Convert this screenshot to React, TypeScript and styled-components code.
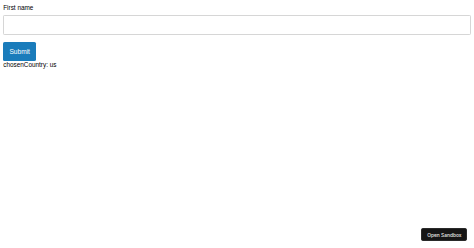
import React from "react";
import styled, { createGlobalStyle } from "styled-components";

const Global = createGlobalStyle`
  html, body { margin: 0; padding: 0; background: #fff; }
  body {
    margin: 3.2px;
    font-family: "Liberation Sans", Arial, sans-serif;
    font-size: 6.4px;
    color: #000;
  }
`;

const Form = styled.form`
  display: flex;
  flex-direction: column;
  align-items: flex-start;
`;

const Label = styled.label`
  display: block;
  line-height: 1.15;
  padding-top: 1px;
  margin-bottom: 3.2px;
`;

const Input = styled.input`
  box-sizing: border-box;
  width: 100%;
  height: 20.4px;
  border: 0.4px solid #d6d6d6;
  border-radius: 1.2px;
  padding: 0 4px;
  font-family: inherit;
  font-size: 6.4px;
  margin: 0 0 6.8px;
  outline: none;
`;

const Button = styled.button`
  box-sizing: border-box;
  height: 19px;
  width: 33px;
  padding: 0;
  border: none;
  border-radius: 1.6px;
  background: #1a7cbb;
  color: #fff;
  font-family: inherit;
  font-size: 6.6px;
  cursor: pointer;
`;

const Output = styled.div`
  line-height: 1.15;
  margin-top: 0.4px;
`;

const SandboxButton = styled.a`
  position: fixed;
  right: 6.6px;
  bottom: 6.8px;
  box-sizing: border-box;
  width: 46px;
  height: 13.4px;
  display: flex;
  align-items: center;
  justify-content: center;
  background: #151515;
  border: 0.4px solid #2a2a2a;
  border-radius: 1.8px;
  color: #e8e8e8;
  font-family: Inter, "Liberation Sans", sans-serif;
  font-size: 4.9px;
  font-weight: 500;
  text-decoration: none;
`;

export default function App() {
  const [country] = React.useState("us");
  return (
    <>
      <Global />
      <Form onSubmit={(e) => e.preventDefault()}>
        <Label htmlFor="firstName">First name</Label>
        <Input id="firstName" type="text" />
        <Button type="submit">Submit</Button>
      </Form>
      <Output>chosenCountry: {country}</Output>
      <SandboxButton href="#">Open Sandbox</SandboxButton>
    </>
  );
}
